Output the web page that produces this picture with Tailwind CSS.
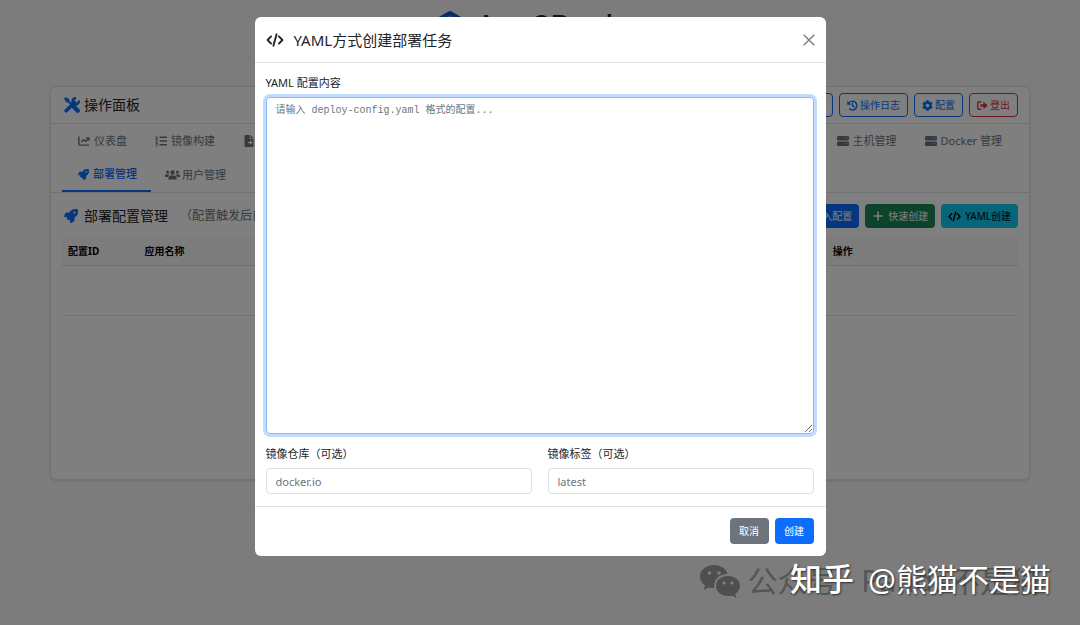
<!DOCTYPE html>
<html lang="zh-CN">
<head>
<meta charset="utf-8">
<title>App2Docker</title>
<script src="https://cdn.jsdelivr.net/npm/@tailwindcss/browser@4"></script>
</head>
<body class="relative min-h-screen overflow-hidden bg-[#f8f9fa] font-['Noto_Sans','Noto_Sans_CJK_SC',sans-serif] text-[11px] leading-4 text-[#212529]">
<svg class="hidden">
  <symbol id="rocket" viewBox="0 0 512 512"><path fill="currentColor" d="M505.1 19.1c-1.2-5.5-6.7-11-12.2-12.2C460.7 0 435.5 0 410.4 0 307.200 0 245.300 55.200 199.100 128H94.800c-16.300 0-35.500 11.900-42.900 26.500L2.500 253.300A28.400 28.400 0 0 0 0 264a24 24 0 0 0 24 24H127.800l-22.500 22.500c-11.400 11.400-13 32.300 0 45.200L156.200 406.600c11.200 11.200 32.200 13.200 45.300 0l22.500-22.500V488a24 24 0 0 0 24 24 28.600 28.600 0 0 0 10.700-2.500l98.700-49.400c14.600-7.300 26.500-26.500 26.500-42.900V312.800c72.600-46.300 128-108.400 128-211.100C512 76.500 512 51.300 505.100 19.100ZM384 168A40 40 0 1 1 424 128 40 40 0 0 1 384 168Z"/></symbol>
  <symbol id="gear" viewBox="0 0 512 512"><path fill="currentColor" d="M487.400 315.700l-42.600-24.600c4.300-23.200 4.300-47 0-70.200l42.600-24.600c4.900-2.800 7.100-8.600 5.500-14-11.100-35.600-30-67.800-54.700-94.600-3.800-4.100-10-5.100-14.800-2.300L380.800 110c-17.900-15.400-38.500-27.300-60.800-35.100V25.800c0-5.600-3.900-10.500-9.400-11.700-36.700-8.200-74.300-7.800-109.200 0-5.500 1.200-9.400 6.100-9.400 11.700V75c-22.200 7.900-42.800 19.800-60.800 35.100L88.700 85.500c-4.900-2.800-11-1.900-14.800 2.300-24.700 26.700-43.600 58.900-54.700 94.600-1.700 5.400.6 11.200 5.500 14L67.300 221c-4.300 23.200-4.300 47 0 70.200l-42.600 24.600c-4.900 2.800-7.100 8.600-5.500 14 11.100 35.600 30 67.800 54.700 94.600 3.800 4.100 10 5.100 14.800 2.300l42.600-24.600c17.900 15.400 38.500 27.300 60.800 35.100v49.200c0 5.600 3.900 10.500 9.400 11.700 36.700 8.200 74.300 7.800 109.200 0 5.500-1.200 9.400-6.100 9.400-11.700v-49.200c22.200-7.900 42.800-19.800 60.800-35.100l42.600 24.600c4.900 2.800 11 1.900 14.800-2.300 24.700-26.700 43.600-58.900 54.700-94.600 1.500-5.500-.7-11.300-5.600-14.100zM256 336c-44.100 0-80-35.900-80-80s35.900-80 80-80 80 35.900 80 80-35.900 80-80 80z"/></symbol>
  <symbol id="chart" viewBox="0 0 16 16"><path d="M1.200 2v10.300a1.200 1.200 0 0 0 1.200 1.200H15M4.300 9.400l3.200-3.300 2.600 2.500L14 4.600M10.700 4H14.500v3.800" fill="none" stroke="currentColor" stroke-width="1.900"/></symbol>
  <symbol id="list" viewBox="0 0 16 16"><path d="M6 3h10M6 8h10M6 13h10" fill="none" stroke="currentColor" stroke-width="1.900"/><path d="M.8 1.500h1.500v3.200M.6 4.700h3.200M.8 6.500h2.400v1.200L.9 9.500h2.700M.7 11.300h2.500l-1 1.500c1.600 0 1.500 2-.2 2H.6" fill="none" stroke="currentColor" stroke-width="1.200"/></symbol>
  <symbol id="server" viewBox="0 0 16 16"><path fill="currentColor" fill-rule="evenodd" d="M1.500 1.200h13A1.500 1.500 0 0 1 16 2.700v3a1.500 1.500 0 0 1-1.500 1.500h-13A1.500 1.500 0 0 1 0 5.700v-3a1.500 1.500 0 0 1 1.500-1.500zm9 2.500v1h1v-1zm2.500 0v1h1v-1zM1.500 8.800h13a1.500 1.500 0 0 1 1.500 1.500v3a1.500 1.500 0 0 1-1.500 1.500h-13A1.500 1.500 0 0 1 0 13.300v-3a1.500 1.500 0 0 1 1.500-1.500zm9 2.500v1h1v-1zm2.500 0v1h1v-1z"/></symbol>
  <symbol id="users" viewBox="0 0 20 16"><g fill="currentColor"><circle cx="10" cy="4.600" r="3"/><circle cx="3.500" cy="4" r="2"/><circle cx="16.500" cy="4" r="2"/><path d="M4.500 14v-2A3.500 3.500 0 0 1 8 8.500h4a3.500 3.500 0 0 1 3.500 3.500v2zM0 10.500V9a2 2 0 0 1 2-2h2.500q1 0 1.600.7Q4 8.800 3.700 10.500zM20 10.500V9a2 2 0 0 0-2-2h-2.500q-1 0-1.600.7 2.100 1.100 2.400 2.800z"/></g></symbol>
  <symbol id="file" viewBox="0 0 16 16"><path fill="currentColor" fill-rule="evenodd" d="M3.500 0H9v5h5v9.500a1.500 1.500 0 0 1-1.500 1.500h-9A1.500 1.500 0 0 1 2 14.500v-13A1.500 1.500 0 0 1 3.500 0zM10 0l4 4h-4zM9.500 9H7v2h2.500v2l3.500-3-3.500-3z"/></symbol>
  <symbol id="tools" viewBox="0 0 16 16"><g fill="none" stroke="currentColor"><path d="M2.200 13.800 10.500 5.500" stroke-width="3.600" stroke-linecap="round"/><path d="M14.600 3.600A3.100 3.100 0 1 1 12 1.300" stroke-width="2.600"/><path d="M2 2l6 6" stroke-width="2"/><path d="M9.800 9.800l3.900 3.900" stroke-width="4.400" stroke-linecap="round"/></g><path fill="currentColor" d="M0 1.800 1.800 0l3.400 2.300.2 2.100-1 1-2.100-.2z"/></symbol>
  <symbol id="code" viewBox="0 0 20 16"><path d="M5.500 3.800 1.500 8l4 4.200M14.500 3.800l4 4.200-4 4.200M11.800 1.500 8.200 14.500" fill="none" stroke="currentColor" stroke-width="2.200" stroke-linecap="round" stroke-linejoin="round"/></symbol>
  <symbol id="history" viewBox="0 0 16 16"><path d="M2.700 4.600A6.400 6.400 0 1 1 3.500 12.700M8 4.500V8.300l2.700 1.900" fill="none" stroke="currentColor" stroke-width="1.900" stroke-linecap="round"/><path fill="currentColor" d="M.4 1.200v5.600H6z"/></symbol>
  <symbol id="logout" viewBox="0 0 16 16"><path d="M6 2.500H3A1.900 1.900 0 0 0 1.100 4.400v7.200A1.900 1.900 0 0 0 3 13.500h3" fill="none" stroke="currentColor" stroke-width="2"/><path fill="currentColor" d="M5 6.300h4.500V2.700L15.600 8 9.500 13.300V9.700H5z"/></symbol>
</svg>

<main class="flex flex-col px-[50px] pt-2">
  <header class="flex items-center justify-center gap-3 pl-2">
    <svg class="h-8 w-7" viewBox="0 0 28 32"><path d="M14 3 25.500 9.500v13L14 29 2.500 22.500v-13z" fill="#4d94ff" stroke="#1559c4" stroke-width="4"/><path d="M14 10l6 3.500-6 3.500-6-3.500z" fill="#cfe2ff"/></svg>
    <h1 class="text-[30px] leading-9 font-medium">App2Docker</h1>
  </header>

  <section class="mt-[42px] rounded-md border border-[#dee2e6] bg-white pb-[163px] shadow-sm">
    <div class="flex items-center justify-between border-b border-[#dee2e6] px-[11px] py-1.5">
      <h2 class="flex items-center gap-1 pl-0.5 text-[14px] leading-5"><svg class="size-4 text-[#0d6efd]"><use href="#tools"/></svg>操作面板</h2>
      <div class="flex gap-1.5 text-[10px]">
        <button class="flex h-6 items-center gap-0.5 rounded border border-[#0d6efd] px-[7px] text-[#0d6efd]">用户</button>
        <button class="flex h-6 items-center gap-0.5 rounded border border-[#0d6efd] px-[7px] text-[#0d6efd]"><svg class="size-[11px]"><use href="#history"/></svg>操作日志</button>
        <button class="flex h-6 items-center gap-0.5 rounded border border-[#0d6efd] px-[7px] text-[#0d6efd]"><svg class="size-[11px]"><use href="#gear"/></svg>配置</button>
        <button class="flex h-6 items-center gap-0.5 rounded border border-[#dc3545] px-[7px] text-[#dc3545]"><svg class="size-[11px]"><use href="#logout"/></svg>登出</button>
      </div>
    </div>

    <nav class="border-b border-[#dee2e6] px-[11px] text-[#6c757d]">
      <div class="flex">
        <a href="#" class="flex h-[34px] items-center gap-1 pr-3 pl-4"><svg class="size-3"><use href="#chart"/></svg>仪表盘</a>
        <a href="#" class="flex h-[34px] items-center gap-1 px-4"><svg class="size-3"><use href="#list"/></svg>镜像构建</a>
        <a href="#" class="flex h-[34px] items-center gap-1 pl-3"><svg class="size-3"><use href="#file"/></svg>导出镜像</a>
        <a href="#" class="ml-auto flex h-[34px] items-center gap-1 px-4"><svg class="size-3"><use href="#server"/></svg>主机管理</a>
        <a href="#" class="flex h-[34px] items-center gap-1 pr-4 pl-3"><svg class="size-3"><use href="#server"/></svg>Docker 管理</a>
      </div>
      <div class="flex">
        <a href="#" class="flex h-[34px] items-center gap-1 border-b-2 border-[#0d6efd] pr-3.5 pl-4 font-medium text-[#0d6efd]"><svg class="size-[11px]"><use href="#rocket"/></svg>部署管理</a>
        <a href="#" class="flex h-[34px] items-center gap-0.5 px-3.5"><svg class="h-3 w-[15px]"><use href="#users"/></svg>用户管理</a>
      </div>
    </nav>

    <div class="px-[11px] pt-[11px]">
      <div class="flex items-center justify-between">
        <h3 class="flex items-center gap-1.5 pl-0.5 text-[14px] leading-5"><svg class="size-[14px] text-[#0d6efd]"><use href="#rocket"/></svg>部署配置管理<span class="pl-1.5 text-xs text-[#6c757d]">（配置触发后自动部署）</span></h3>
        <div class="flex gap-1.5 text-[10px]">
          <button class="flex h-6 items-center rounded bg-[#0d6efd] px-[7px] text-white">导入配置</button>
          <button class="flex h-6 items-center gap-1 rounded bg-[#198754] px-[7px] text-white"><svg class="size-3" viewBox="0 0 12 12"><path d="M6 1.500v9M1.500 6h9" stroke="currentColor" stroke-width="1.500"/></svg>快速创建</button>
          <button class="flex h-6 items-center gap-1 rounded bg-[#0dcaf0] px-[7px] text-black"><svg class="h-[11px] w-[13px]"><use href="#code"/></svg>YAML创建</button>
        </div>
      </div>
      <table class="mt-[10px] w-full table-fixed text-left text-[10px]">
        <thead class="border-b border-[#dee2e6] bg-[#f8f9fa] text-black">
          <tr class="h-[27px]"><th class="w-[8%] px-1.5">配置ID</th><th class="w-[72%] px-1.5">应用名称</th><th class="px-1.5">操作</th></tr>
        </thead>
        <tbody><tr class="h-[50px] border-b border-[#dee2e6]"><td colspan="3"></td></tr></tbody>
      </table>
    </div>
  </section>
</main>

<div class="absolute inset-0 bg-black/50 px-4 pt-[17px]">
  <form role="dialog" aria-labelledby="dialog-title" class="mx-auto max-w-[571px] rounded-md bg-white">
    <div class="flex h-[46px] items-center justify-between border-b border-[#dee2e6] pr-[11px] pl-[11px]">
      <h2 id="dialog-title" class="flex items-center gap-2.5 text-[15px] leading-5"><svg class="h-[14px] w-[18px]"><use href="#code"/></svg>YAML方式创建部署任务</h2>
      <button type="button" aria-label="关闭" class="text-[#808080]"><svg class="size-3" viewBox="0 0 12 12"><path d="M.7.700l10.600 10.600M11.300.7.700 11.300" stroke="currentColor" stroke-width="1.500"/></svg></button>
    </div>
    <div class="pt-3 pr-3 pb-3 pl-[11px]">
      <label for="yaml" class="block">YAML 配置内容</label>
      <textarea id="yaml" placeholder="请输入 deploy-config.yaml 格式的配置..." class="mt-1.5 block h-[337px] w-full resize-y rounded border border-[#86b7fe] px-[9px] py-[5px] font-['Liberation_Mono','Noto_Sans_CJK_SC',monospace] text-[10px] leading-4 shadow-[0_0_0_3px_#c2dbfe] outline-none placeholder:text-[#6c757d]"></textarea>
      <div class="mt-3 grid grid-cols-2 gap-4">
        <div><label for="registry" class="block">镜像仓库（可选）</label><input id="registry" placeholder="docker.io" class="mt-1.5 block h-[26px] w-full rounded border border-[#dee2e6] px-[9px] outline-none placeholder:text-[#6c757d]"></div>
        <div><label for="tag" class="block">镜像标签（可选）</label><input id="tag" placeholder="latest" class="mt-1.5 block h-[26px] w-full rounded border border-[#dee2e6] px-[9px] outline-none placeholder:text-[#6c757d]"></div>
      </div>
    </div>
    <div class="flex justify-end gap-1.5 border-t border-[#dee2e6] pt-[11px] pr-3 pb-3 pl-[11px] text-[10px] text-white">
      <button type="button" class="h-[26px] w-[39px] rounded bg-[#6c757d]">取消</button>
      <button type="submit" class="h-[26px] w-[39px] rounded bg-[#0d6efd]">创建</button>
    </div>
  </form>
</div>

<div class="absolute top-[563px] right-[40px] flex items-center gap-2 text-[30px] leading-9 whitespace-nowrap text-[#555]">
  <svg class="h-9 w-10" viewBox="0 0 40 36"><path fill="#4f4f4f" d="M14 2C6 2 0 7 0 13.500c0 3.600 2 6.800 5 9L3.800 27l5-2.600q2.500.7 5.500.6C13 17 19 11 27.500 11 26 5.500 20.500 2 14 2z"/><path fill="#4f4f4f" d="M28 13c-6.700 0-12 4.300-12 10s5.300 10 12 10q2 0 4-.6l4.200 2.300-1-3.900c3-1.900 4.800-4.700 4.800-7.800 0-5.700-5.300-10-12-10z"/><g fill="#808080"><circle cx="9.500" cy="10" r="1.700"/><circle cx="19" cy="10" r="1.700"/><circle cx="24" cy="20" r="1.500"/><circle cx="32" cy="20" r="1.500"/></g></svg>
  <span>公众号 · Panda不是猫</span>
</div>
<div class="absolute top-[559px] right-[29px] text-[31px] leading-10 whitespace-nowrap text-white [text-shadow:1px_1px_2px_#333]"><span class="pr-1.5 text-[32px] font-medium">知乎</span> @熊猫不是猫</div>
</body>
</html>
